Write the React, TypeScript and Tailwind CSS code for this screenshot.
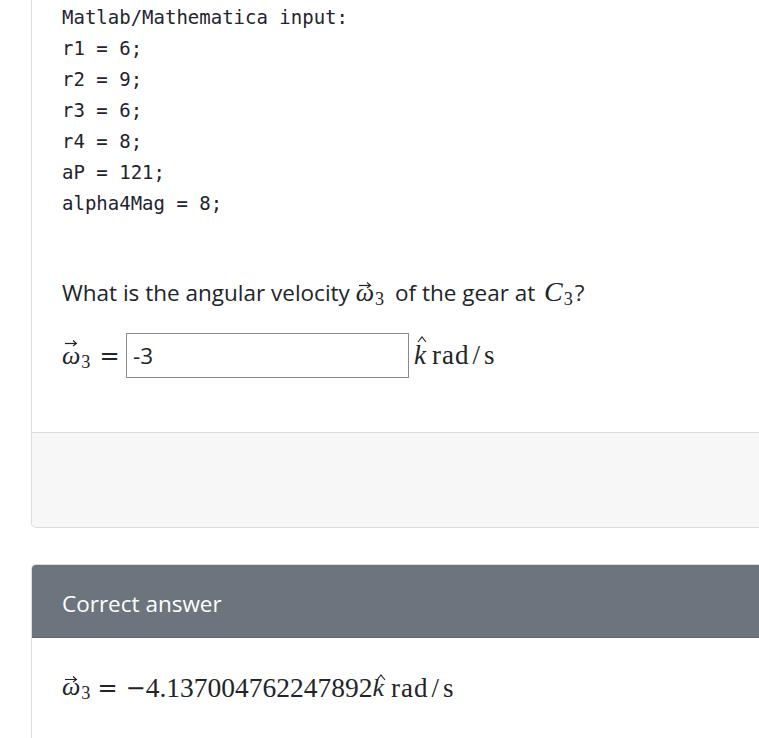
import React from "react";

const codeLines = [
  "Matlab/Mathematica input:",
  "r1 = 6;",
  "r2 = 9;",
  "r3 = 6;",
  "r4 = 8;",
  "aP = 121;",
  "alpha4Mag = 8;",
];

const serif = { fontFamily: "'Liberation Serif', 'DejaVu Serif', serif" };
const sym = { fontFamily: "'DejaVu Serif', 'Liberation Serif', serif" };
const sans = { fontFamily: "'Open Sans', 'Noto Sans', sans-serif" };

function VecOmega() {
  return (
    <span className="relative inline-block">
      <span className="italic">ω</span>
      <svg
        className="absolute left-[2px] top-[3px]"
        width="14"
        height="8"
        viewBox="0 0 14 8"
        fill="none"
      >
        <path d="M1 4.5 H12" stroke="#222" strokeWidth="1.2" />
        <path d="M9 1.5 L12.5 4.5 L9 7" stroke="#222" strokeWidth="1.1" />
      </svg>
      <span className="text-[0.7em] relative top-[0.2em] not-italic ml-[1px]">3</span>
    </span>
  );
}

function HatK() {
  return (
    <span className="relative inline-block">
      <span className="italic">k</span>
      <svg className="absolute left-[3px] top-[1px]" width="10" height="7" viewBox="0 0 10 7" fill="none">
        <path d="M1 6 L5 1 L9 6" stroke="#222" strokeWidth="1.1" />
      </svg>
    </span>
  );
}

function RadS() {
  return (
    <span className="tracking-[1px]">
      rad<span className="mx-[3px]">/</span>s
    </span>
  );
}

export default function App() {
  return (
    <div className="w-[759px] h-[738px] overflow-hidden bg-white text-[#212529]">
      <div className="ml-[31px] w-[780px] border-x border-b border-[#dcdcdc] rounded-b-[5px] overflow-hidden">
        <div className="pl-[30px]">
          <div
            className="pt-[2px] text-[19px] leading-[31px] text-[#1f2430]"
            style={{ fontFamily: "'DejaVu Sans Mono', 'Liberation Mono', monospace" }}
          >
            {codeLines.map((l) => (
              <div key={l} className="whitespace-pre">
                {l}
              </div>
            ))}
          </div>

          <p className="mt-[58px] text-[22.5px] leading-[30px]" style={sans}>
            What is the angular velocity{" "}
            <span className="text-[26px] mr-[5px]" style={serif}>
              <VecOmega />
            </span>{" "}
            of the gear at{" "}
            <span className="text-[28px] ml-[3px] mr-[2px]" style={serif}>
              <span className="italic">C</span>
              <span className="text-[0.65em] relative top-[0.2em] ml-[1px]">3</span>
            </span>
            ?
          </p>

          <div className="mt-[23px] flex items-center h-[45px]">
            <span className="text-[26px] w-[64px] flex items-center" style={serif}>
              <VecOmega />
              <span className="ml-[9px] text-[24px]" style={sym}>=</span>
            </span>
            <div
              className="w-[283px] h-[45px] border border-[#8a8a8a] flex items-center pl-[6px] text-[22.5px]"
              style={sans}
            >
              -3
            </div>
            <span className="text-[27px] ml-[5px]" style={serif}>
              <HatK />
              <span className="ml-[6px]">
                <RadS />
              </span>
            </span>
          </div>
        </div>

        <div className="mt-[54px] h-[95px] bg-[#f7f7f7] border-t border-[#dcdcdc]" />
      </div>

      <div className="ml-[31px] mt-[36px] w-[780px] h-[200px] border border-[#dcdcdc] rounded-t-[5px] overflow-hidden">
        <div
          className="h-[73px] bg-[#6c757d] border-b border-[#5f666d] flex items-center pl-[30px] pt-[5px] text-white text-[22.5px]"
          style={sans}
        >
          Correct answer
        </div>
        <div className="pl-[30px] pt-[34px] text-[27.5px] leading-[30px] flex items-center" style={serif}>
          <span className="text-[26px]">
            <VecOmega />
          </span>
          <span className="ml-[7px] mr-[8px] text-[24px]" style={sym}>=</span>
          <span className="text-[24px]" style={sym}>−</span>
          <span>4.137004762247892</span>
          <span className="text-[26px]">
            <HatK />
          </span>
          <span className="ml-[7px] text-[27px]">
            <RadS />
          </span>
        </div>
      </div>
    </div>
  );
}
